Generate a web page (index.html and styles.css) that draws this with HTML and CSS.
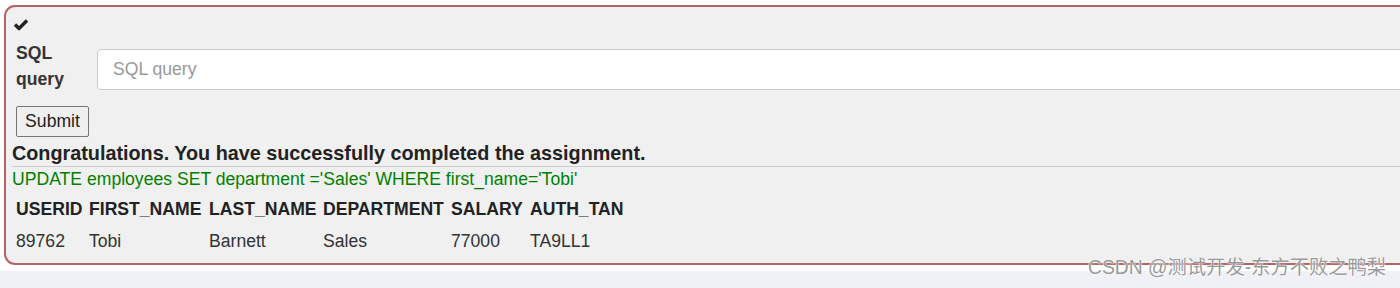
FILE: index.html
```html
<!DOCTYPE html>
<html>
<head>
<meta charset="utf-8">
<link rel="stylesheet" href="styles.css">
</head>
<body>
<div class="page">
  <div class="attack">
    <div class="check"><svg width="16" height="13" viewBox="0 0 16 13"><path d="M2 6.5 L6 10.5 L14 2.5" fill="none" stroke="#222" stroke-width="3.4" stroke-linejoin="round"/></svg></div>
    <div class="form-row">
      <label class="lbl">SQL<br>query</label>
      <div class="field">SQL query</div>
    </div>
    <button class="btn">Submit</button>
    <div class="feedback">Congratulations. You have successfully completed the assignment.</div>
    <div class="rule"></div>
    <div class="output">UPDATE employees SET department ='Sales' WHERE first_name='Tobi'</div>
    <table class="results">
      <tr><th class="c1">USERID</th><th class="c2">FIRST_NAME</th><th class="c3">LAST_NAME</th><th class="c4">DEPARTMENT</th><th class="c5">SALARY</th><th>AUTH_TAN</th></tr>
      <tr><td>89762</td><td>Tobi</td><td>Barnett</td><td>Sales</td><td>77000</td><td>TA9LL1</td></tr>
    </table>
  </div>
  <div class="strip"></div>
  <div class="watermark">CSDN @测试开发-东方不败之鸭梨</div>
</div>
</body>
</html>
```
FILE: styles.css
```css
html, body { margin: 0; padding: 0; background: #fff; overflow: hidden; }
body { font-family: "Liberation Sans", Arial, sans-serif; color: #333; width: 1400px; height: 288px; }
.page { position: relative; width: 1400px; height: 288px; padding-top: 5px; box-sizing: border-box; overflow: hidden; }
.attack {
  margin-left: 4px; width: 1500px; height: 260px; box-sizing: border-box;
  border: 2px solid #b46464; border-radius: 11px; background: #f0f0f0;
  padding: 10px 0 0 6px; display: flex; flex-direction: column; align-items: flex-start;
}
.check { height: 15px; padding-left: 1px; display: flex; align-items: center; }
.form-row { display: flex; align-items: flex-start; margin-top: 17px; }
.lbl { font-weight: bold; font-size: 17.6px; line-height: 26px; width: 81px; padding-left: 4px; margin-top: -9px; color: #333; }
.field {
  width: 1400px; height: 41px; box-sizing: border-box; background: #fff;
  border: 1px solid #ccc; border-radius: 4px; padding-left: 15px;
  display: flex; align-items: center; color: #999; font-size: 17.6px;
}
.btn {
  margin: 14px 0 0 4px; width: 73px; height: 31px; font-family: inherit; font-size: 17.6px;
  color: #222; background: #efefef; border: 1px solid #767676; border-radius: 2px; padding: 0;
}
.feedback { font-weight: bold; font-size: 19.8px; line-height: 22px; margin-top: 5px; color: #222; }
.rule { width: 1400px; height: 1px; background: #ccc; margin-top: 2px; }
.output { color: #008000; font-size: 17.6px; line-height: 20px; margin-top: 2px; }
.results { border-collapse: collapse; margin-top: 6px; font-size: 17.6px; color: #333; }
.results th, .results td { text-align: left; padding: 0 0 0 4px; white-space: nowrap; }
.results th { font-weight: bold; height: 28px; color: #222; }
.results td { height: 36px; }
.c1 { width: 69px; } .c2 { width: 116px; } .c3 { width: 110px; } .c4 { width: 124px; } .c5 { width: 75px; }
.strip { height: 17px; background: #eff1f6; margin-top: 6px; }
.watermark {
  position: absolute; left: 1088px; top: 252px; font-size: 19.3px; color: #999;
  font-family: "Liberation Sans", "Noto Sans CJK SC", sans-serif;
  text-shadow: 0 0 2px #fff, 0 0 1px #fff;
}
```
